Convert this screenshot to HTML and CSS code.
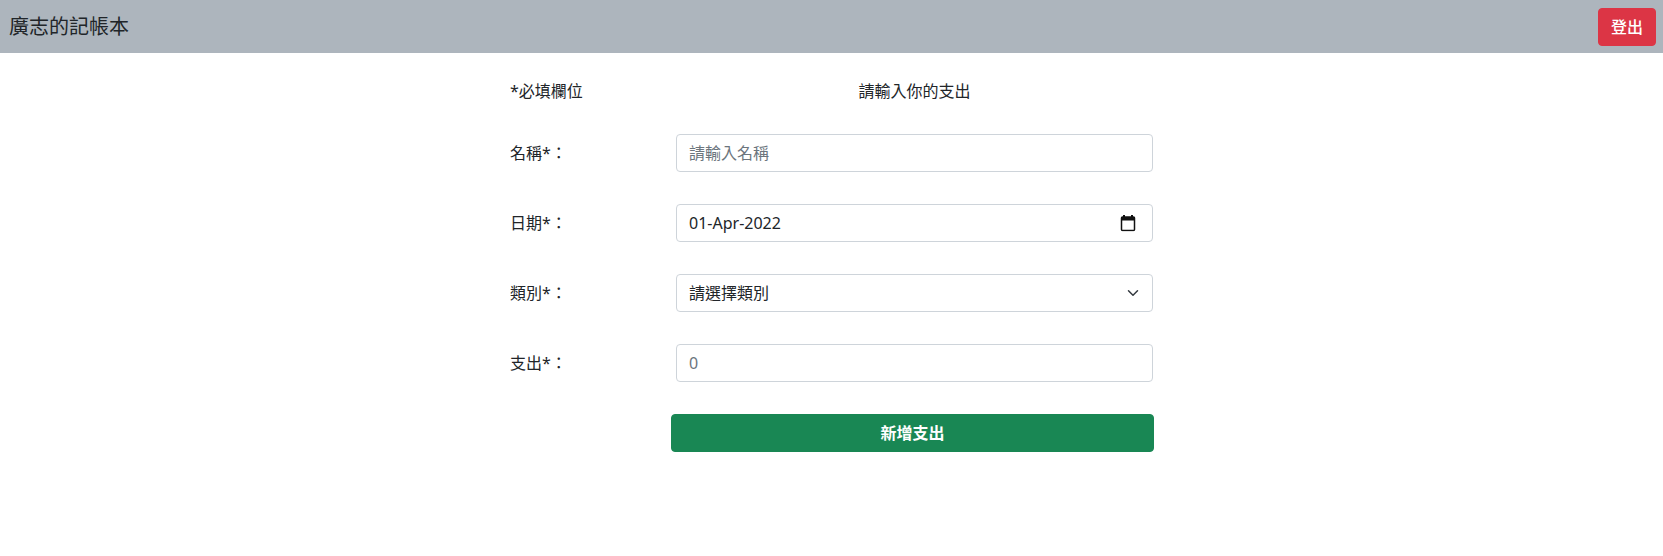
FILE: index.html
```html
<!DOCTYPE html>
<html lang="zh-Hant">
<head>
    <meta charset="UTF-8">
    <meta name="viewport" content="width=device-width, initial-scale=1.0">
    <title>廣志的記帳本</title>
    <link rel="stylesheet" href="styles.css">
</head>
<body>
    <header class="navbar">
        <span class="brand">廣志的記帳本</span>
        <button class="btn btn-logout" type="button">登出</button>
    </header>

    <main class="page">
        <form class="expense-form">
            <div class="form-row heading-row">
                <span class="required-note">*必填欄位</span>
                <span class="form-title">請輸入你的支出</span>
            </div>

            <div class="form-row">
                <label for="name">名稱*：</label>
                <input class="field" id="name" type="text" placeholder="請輸入名稱">
            </div>

            <div class="form-row">
                <label for="date">日期*：</label>
                <div class="field-wrap">
                    <input class="field" id="date" type="text" value="01-Apr-2022">
                    <svg class="field-icon calendar" width="16" height="17" viewBox="0 0 16 17">
                        <rect x="3" y="0.5" width="2" height="3" fill="#111"/>
                        <rect x="11" y="0.5" width="2" height="3" fill="#111"/>
                        <rect x="1.5" y="2.5" width="13" height="13.5" rx="1" fill="none" stroke="#111" stroke-width="1.5"/>
                        <rect x="1.5" y="2.5" width="13" height="3.5" fill="#111"/>
                    </svg>
                </div>
            </div>

            <div class="form-row">
                <label for="category">類別*：</label>
                <div class="field-wrap">
                    <select class="field select" id="category">
                        <option>請選擇類別</option>
                        <option>餐飲</option>
                        <option>交通</option>
                        <option>娛樂</option>
                    </select>
                    <svg class="field-icon chevron" width="16" height="12" viewBox="0 0 16 16">
                        <path d="M2 5l6 6 6-6" fill="none" stroke="#343a40" stroke-width="2" stroke-linecap="round" stroke-linejoin="round"/>
                    </svg>
                </div>
            </div>

            <div class="form-row">
                <label for="amount">支出*：</label>
                <input class="field" id="amount" type="text" placeholder="0">
            </div>

            <div class="form-row">
                <span></span>
                <button class="btn btn-submit" type="submit">新增支出</button>
            </div>
        </form>
    </main>
</body>
</html>
```

FILE: styles.css
```css
body {
    margin: 0;
    font-family: "Noto Sans", "Noto Sans CJK TC", sans-serif;
    font-size: 16px;
    line-height: 24px;
    color: #212529;
    background: #fff;
}

.navbar {
    height: 53px;
    background: #adb5bd;
    display: flex;
    align-items: center;
    justify-content: space-between;
    padding: 0 7px 0 9px;
}
.brand {
    font-size: 20px;
    line-height: 30px;
    color: #212529;
}

.btn {
    font-family: inherit;
    font-size: 16px;
    line-height: 24px;
    border: 1px solid transparent;
    border-radius: 4px;
    padding: 6px 12px;
    color: #fff;
    cursor: pointer;
}
.btn-logout {
    font-weight: 500;
    background: #dc3545;
    border-color: #dc3545;
}

.expense-form {
    width: 643px;
    margin: 0 auto;
    padding-top: 26px;
    display: flex;
    flex-direction: column;
    gap: 32px;
}
.form-row {
    display: grid;
    grid-template-columns: 154px 1fr;
    column-gap: 12px;
    align-items: center;
}
.heading-row {
    margin-bottom: -1px;
}
.form-title {
    text-align: center;
}

.field-wrap {
    position: relative;
}
.field {
    display: block;
    box-sizing: border-box;
    width: 100%;
    height: 38px;
    padding: 6px 12px;
    font-family: inherit;
    font-size: 16px;
    line-height: 24px;
    color: #212529;
    background: #fff;
    border: 1px solid #ced4da;
    border-radius: 4px;
    outline: none;
}
.field::placeholder {
    color: #6c757d;
}
.select {
    appearance: none;
    -webkit-appearance: none;
    padding-right: 36px;
}
.field-icon {
    position: absolute;
    top: 50%;
    transform: translateY(-50%);
    pointer-events: none;
}
.calendar {
    right: 17px;
}
.chevron {
    right: 12px;
}

.btn-submit {
    height: 38px;
    margin-left: -5px;
    width: calc(100% + 6px);
    padding: 0;
    font-weight: 700;
    background: #198754;
    border-color: #198754;
}
```
